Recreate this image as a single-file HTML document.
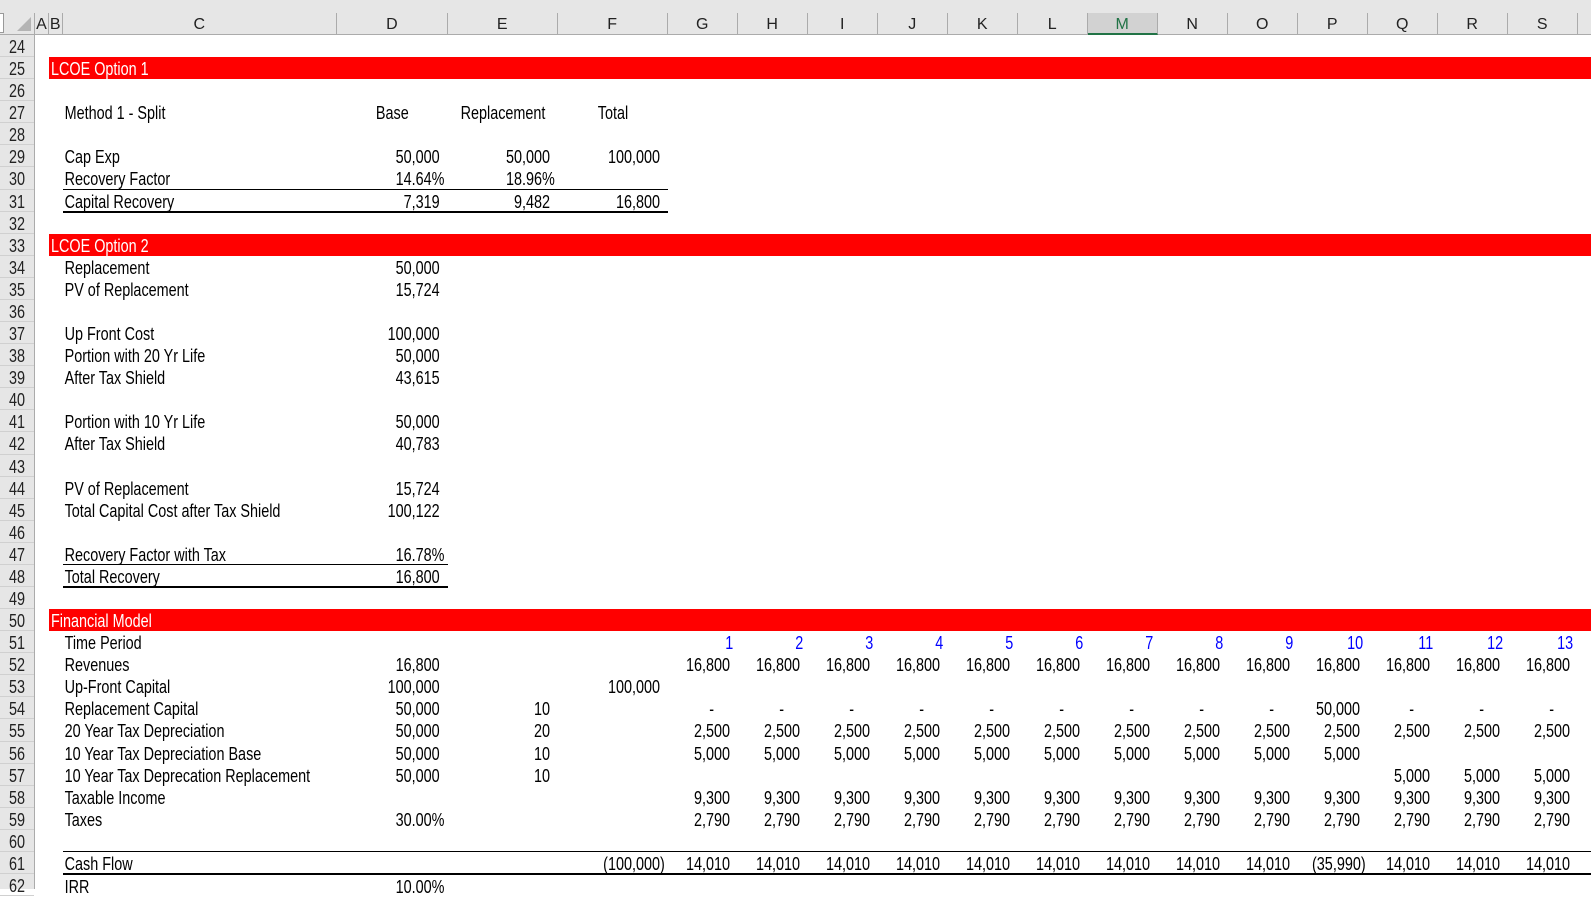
<!DOCTYPE html>
<html><head><meta charset="utf-8"><style>
*{margin:0;padding:0;box-sizing:border-box}
body{width:1591px;height:889px;overflow:hidden;background:#fff;position:relative;font-family:"Liberation Sans Narrow","Liberation Sans",sans-serif;font-size:18px;color:#000}
.hdr{position:absolute;left:0;top:0;width:1591px;height:35px;background:#e6e6e6;border-bottom:1px solid #ababab}
.ch{position:absolute;top:13px;height:22px;line-height:24px;text-align:center;font-family:"Liberation Sans",sans-serif;font-size:16px;border-right:1px solid #ababab;color:#222}
.rh{position:absolute;left:0;top:35px;width:35px;height:854px;background:#e6e6e6;border-right:1px solid #ababab}
.rn{position:absolute;left:0;width:34px;height:22.08px;line-height:24px;text-align:center;border-bottom:1px solid #d0d0d0;color:#222}
.rn span{display:inline-block;transform:scaleX(.8)}
.r{position:absolute;left:0;width:1591px;height:22.08px;line-height:24px}
.r>div{position:absolute;top:0;height:22px;white-space:nowrap;transform:scaleX(.8);transform-origin:right center}
.r>div.C{transform-origin:left center}
.r>div.ct{transform-origin:center center}
.C{left:63px;width:274px;padding-left:2px}
.D{left:337px;width:110.7px}.E{left:447.7px;width:110px}.F{left:557.7px;width:110px}
.G{left:667.7px;width:70px}.H{left:737.7px;width:70px}.I{left:807.7px;width:70px}.J{left:877.7px;width:70px}.K{left:947.7px;width:70px}.L{left:1017.7px;width:70px}.M{left:1087.7px;width:70px}.N{left:1157.7px;width:70px}.O{left:1227.7px;width:70px}.P{left:1297.7px;width:70px}.Q{left:1367.7px;width:70px}.R{left:1437.7px;width:70px}.S{left:1507.7px;width:70px}
.n{text-align:right;padding-right:10px}.p{text-align:right;padding-right:4px}.d{text-align:right;padding-right:30px}.ct{text-align:center}
.b{color:#0000ff;text-align:right;padding-right:6px}
.r>div.red{background:#ff0000;color:#fff;left:48.7px;width:1543px;padding-left:2px;transform:none}
.red span{display:inline-block;transform:scaleX(.8);transform-origin:left center}
.ln{position:absolute;background:#000}
</style></head><body>
<div class="hdr"></div>
<div style="position:absolute;left:0;top:13px;width:4px;height:20px;background:#fff;border:1px solid #999;border-left:none"></div>
<svg style="position:absolute;left:17px;top:17px" width="15" height="15"><polygon points="14,0 14,14 0,14" fill="#b4b4b4"/></svg>
<div class="ch" style="left:34.3px;width:14.4px;border-left:1px solid #ababab">A</div>
<div class="ch" style="left:48.7px;width:14px">B</div>
<div class="ch" style="left:62.7px;width:274.3px">C</div>
<div class="ch" style="left:337px;width:110.7px">D</div>
<div class="ch" style="left:447.7px;width:110px">E</div>
<div class="ch" style="left:557.7px;width:110px">F</div>
<div class="ch" style="left:667.7px;width:70px">G</div>
<div class="ch" style="left:737.7px;width:70px">H</div>
<div class="ch" style="left:807.7px;width:70px">I</div>
<div class="ch" style="left:877.7px;width:70px">J</div>
<div class="ch" style="left:947.7px;width:70px">K</div>
<div class="ch" style="left:1017.7px;width:70px">L</div>
<div class="ch" style="left:1087.7px;width:70px;background:#d2d2d2;border-bottom:2px solid #217346;color:#217346">M</div>
<div class="ch" style="left:1157.7px;width:70px">N</div>
<div class="ch" style="left:1227.7px;width:70px">O</div>
<div class="ch" style="left:1297.7px;width:70px">P</div>
<div class="ch" style="left:1367.7px;width:70px">Q</div>
<div class="ch" style="left:1437.7px;width:70px">R</div>
<div class="ch" style="left:1507.7px;width:70px">S</div>
<div class="ch" style="left:1577.7px;width:30px;border-right:none"></div>

<div class="rh">
<div class="rn" style="top:0px"><span>24</span></div><div class="rn" style="top:22.08px"><span>25</span></div><div class="rn" style="top:44.16px"><span>26</span></div><div class="rn" style="top:66.24px"><span>27</span></div><div class="rn" style="top:88.32px"><span>28</span></div><div class="rn" style="top:110.4px"><span>29</span></div><div class="rn" style="top:132.48px"><span>30</span></div><div class="rn" style="top:154.56px"><span>31</span></div><div class="rn" style="top:176.64px"><span>32</span></div><div class="rn" style="top:198.72px"><span>33</span></div><div class="rn" style="top:220.8px"><span>34</span></div><div class="rn" style="top:242.88px"><span>35</span></div><div class="rn" style="top:264.96px"><span>36</span></div><div class="rn" style="top:287.04px"><span>37</span></div><div class="rn" style="top:309.12px"><span>38</span></div><div class="rn" style="top:331.2px"><span>39</span></div><div class="rn" style="top:353.28px"><span>40</span></div><div class="rn" style="top:375.36px"><span>41</span></div><div class="rn" style="top:397.44px"><span>42</span></div><div class="rn" style="top:419.52px"><span>43</span></div><div class="rn" style="top:441.6px"><span>44</span></div><div class="rn" style="top:463.68px"><span>45</span></div><div class="rn" style="top:485.76px"><span>46</span></div><div class="rn" style="top:507.84px"><span>47</span></div><div class="rn" style="top:529.92px"><span>48</span></div><div class="rn" style="top:552px"><span>49</span></div><div class="rn" style="top:574.08px"><span>50</span></div><div class="rn" style="top:596.16px"><span>51</span></div><div class="rn" style="top:618.24px"><span>52</span></div><div class="rn" style="top:640.32px"><span>53</span></div><div class="rn" style="top:662.4px"><span>54</span></div><div class="rn" style="top:684.48px"><span>55</span></div><div class="rn" style="top:706.56px"><span>56</span></div><div class="rn" style="top:728.64px"><span>57</span></div><div class="rn" style="top:750.72px"><span>58</span></div><div class="rn" style="top:772.8px"><span>59</span></div><div class="rn" style="top:794.88px"><span>60</span></div><div class="rn" style="top:816.96px"><span>61</span></div><div class="rn" style="top:839.04px"><span>62</span></div>
</div>

<div class="r" style="top:57.08px"><div class="red"><span>LCOE Option 1</span></div></div>
<div class="r" style="top:101.24px"><div class="C">Method 1 - Split</div><div class="D ct">Base</div><div class="E ct">Replacement</div><div class="F ct">Total</div></div>
<div class="r" style="top:145.4px"><div class="C">Cap Exp</div><div class="D n">50,000</div><div class="E n">50,000</div><div class="F n">100,000</div></div>
<div class="r" style="top:167.48px"><div class="C">Recovery Factor</div><div class="D p">14.64%</div><div class="E p">18.96%</div></div>
<div class="r" style="top:189.56px"><div class="C">Capital Recovery</div><div class="D n">7,319</div><div class="E n">9,482</div><div class="F n">16,800</div></div>
<div class="ln" style="left:62.7px;width:605px;top:188.5px;height:1px"></div>
<div class="ln" style="left:62.7px;width:605px;top:210.5px;height:2px"></div>
<div class="r" style="top:233.72px"><div class="red"><span>LCOE Option 2</span></div></div>
<div class="r" style="top:255.8px"><div class="C">Replacement</div><div class="D n">50,000</div></div>
<div class="r" style="top:277.88px"><div class="C">PV of Replacement</div><div class="D n">15,724</div></div>
<div class="r" style="top:322.04px"><div class="C">Up Front Cost</div><div class="D n">100,000</div></div>
<div class="r" style="top:344.12px"><div class="C">Portion with 20 Yr Life</div><div class="D n">50,000</div></div>
<div class="r" style="top:366.2px"><div class="C">After Tax Shield</div><div class="D n">43,615</div></div>
<div class="r" style="top:410.36px"><div class="C">Portion with 10 Yr Life</div><div class="D n">50,000</div></div>
<div class="r" style="top:432.44px"><div class="C">After Tax Shield</div><div class="D n">40,783</div></div>
<div class="r" style="top:476.6px"><div class="C">PV of Replacement</div><div class="D n">15,724</div></div>
<div class="r" style="top:498.68px"><div class="C">Total Capital Cost after Tax Shield</div><div class="D n">100,122</div></div>
<div class="r" style="top:542.84px"><div class="C">Recovery Factor with Tax</div><div class="D p">16.78%</div></div>
<div class="r" style="top:564.92px"><div class="C">Total Recovery</div><div class="D n">16,800</div></div>
<div class="ln" style="left:62.7px;width:385px;top:564px;height:1px"></div>
<div class="ln" style="left:62.7px;width:385px;top:586px;height:2px"></div>
<div class="r" style="top:609.08px"><div class="red"><span>Financial Model</span></div></div>
<div class="r" style="top:631.16px"><div class="C">Time Period</div><div class="G b">1</div><div class="H b">2</div><div class="I b">3</div><div class="J b">4</div><div class="K b">5</div><div class="L b">6</div><div class="M b">7</div><div class="N b">8</div><div class="O b">9</div><div class="P b">10</div><div class="Q b">11</div><div class="R b">12</div><div class="S b">13</div></div>
<div class="r" style="top:653.24px"><div class="C">Revenues</div><div class="D n">16,800</div><div class="G n">16,800</div><div class="H n">16,800</div><div class="I n">16,800</div><div class="J n">16,800</div><div class="K n">16,800</div><div class="L n">16,800</div><div class="M n">16,800</div><div class="N n">16,800</div><div class="O n">16,800</div><div class="P n">16,800</div><div class="Q n">16,800</div><div class="R n">16,800</div><div class="S n">16,800</div></div>
<div class="r" style="top:675.32px"><div class="C">Up-Front Capital</div><div class="D n">100,000</div><div class="F n">100,000</div></div>
<div class="r" style="top:697.4px"><div class="C">Replacement Capital</div><div class="D n">50,000</div><div class="E n">10</div><div class="G d">-</div><div class="H d">-</div><div class="I d">-</div><div class="J d">-</div><div class="K d">-</div><div class="L d">-</div><div class="M d">-</div><div class="N d">-</div><div class="O d">-</div><div class="P n">50,000</div><div class="Q d">-</div><div class="R d">-</div><div class="S d">-</div></div>
<div class="r" style="top:719.48px"><div class="C">20 Year Tax Depreciation</div><div class="D n">50,000</div><div class="E n">20</div><div class="G n">2,500</div><div class="H n">2,500</div><div class="I n">2,500</div><div class="J n">2,500</div><div class="K n">2,500</div><div class="L n">2,500</div><div class="M n">2,500</div><div class="N n">2,500</div><div class="O n">2,500</div><div class="P n">2,500</div><div class="Q n">2,500</div><div class="R n">2,500</div><div class="S n">2,500</div></div>
<div class="r" style="top:741.56px"><div class="C">10 Year Tax Depreciation Base</div><div class="D n">50,000</div><div class="E n">10</div><div class="G n">5,000</div><div class="H n">5,000</div><div class="I n">5,000</div><div class="J n">5,000</div><div class="K n">5,000</div><div class="L n">5,000</div><div class="M n">5,000</div><div class="N n">5,000</div><div class="O n">5,000</div><div class="P n">5,000</div></div>
<div class="r" style="top:763.64px"><div class="C">10 Year Tax Deprecation Replacement</div><div class="D n">50,000</div><div class="E n">10</div><div class="Q n">5,000</div><div class="R n">5,000</div><div class="S n">5,000</div></div>
<div class="r" style="top:785.72px"><div class="C">Taxable Income</div><div class="G n">9,300</div><div class="H n">9,300</div><div class="I n">9,300</div><div class="J n">9,300</div><div class="K n">9,300</div><div class="L n">9,300</div><div class="M n">9,300</div><div class="N n">9,300</div><div class="O n">9,300</div><div class="P n">9,300</div><div class="Q n">9,300</div><div class="R n">9,300</div><div class="S n">9,300</div></div>
<div class="r" style="top:807.8px"><div class="C">Taxes</div><div class="D p">30.00%</div><div class="G n">2,790</div><div class="H n">2,790</div><div class="I n">2,790</div><div class="J n">2,790</div><div class="K n">2,790</div><div class="L n">2,790</div><div class="M n">2,790</div><div class="N n">2,790</div><div class="O n">2,790</div><div class="P n">2,790</div><div class="Q n">2,790</div><div class="R n">2,790</div><div class="S n">2,790</div></div>
<div class="r" style="top:851.96px"><div class="C">Cash Flow</div><div class="F p">(100,000)</div><div class="G n">14,010</div><div class="H n">14,010</div><div class="I n">14,010</div><div class="J n">14,010</div><div class="K n">14,010</div><div class="L n">14,010</div><div class="M n">14,010</div><div class="N n">14,010</div><div class="O n">14,010</div><div class="P p">(35,990)</div><div class="Q n">14,010</div><div class="R n">14,010</div><div class="S n">14,010</div></div>
<div class="ln" style="left:62.7px;width:1530px;top:851px;height:1px"></div>
<div class="ln" style="left:62.7px;width:1530px;top:873px;height:2px"></div>
<div class="r" style="top:875px"><div class="C">IRR</div><div class="D p">10.00%</div></div>
</body></html>
